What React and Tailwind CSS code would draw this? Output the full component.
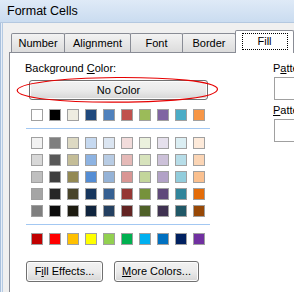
import React from "react";

const themeRow = ["#FFFFFF", "#000000", "#EEECE1", "#1F497D", "#4F81BD", "#C0504D", "#9BBB59", "#8064A2", "#4BACC6", "#F79646"];

const tintRows = [
    ["#F2F2F2", "#7F7F7F", "#DDD9C3", "#C6D9F0", "#DBE5F1", "#F2DCDB", "#EBF1DD", "#E5E0EC", "#DBEEF3", "#FDEADA"],
    ["#D8D8D8", "#595959", "#C4BD97", "#8DB3E2", "#B8CCE4", "#E5B9B7", "#D7E3BC", "#CCC1D9", "#B7DDE8", "#FBD5B5"],
    ["#BFBFBF", "#3F3F3F", "#938953", "#548DD4", "#95B3D7", "#D99694", "#C3D69B", "#B2A2C7", "#92CDDC", "#FAC08F"],
    ["#A5A5A5", "#262626", "#494429", "#17365D", "#366092", "#953734", "#76923C", "#5F497A", "#31859B", "#E36C09"],
    ["#7F7F7F", "#0C0C0C", "#1D1B10", "#0F243E", "#244061", "#632423", "#4F6128", "#3F3151", "#205867", "#974806"],
];

const standardRow = ["#C00000", "#FF0000", "#FFC000", "#FFFF00", "#92D050", "#00B050", "#00B0F0", "#0070C0", "#002060", "#7030A0"];

const tabs = [
    { name: "Number", w: "w-[54px]" },
    { name: "Alignment", w: "w-[67px]" },
    { name: "Font", w: "w-[53px]" },
    { name: "Border", w: "w-[54px]" },
];

const SwatchRow = ({ colors }) => (
    <div className="flex gap-[6px]">
        {colors.map((c, i) => (
            // swatch colour comes from data
            <div key={i} className="w-[12px] h-[12px] shrink-0 border border-[#a0a0a0]" style={{ backgroundColor: c }} />
        ))}
    </div>
);

const WinButton = ({ className, children }) => (
    <div
        className={`flex items-center justify-center shrink-0 rounded-[3px] border border-[#707070] bg-gradient-to-b from-[#f2f2f2] via-[#ebebeb] to-[#d6d6d6] shadow-[inset_0_0_0_1px_#fcfcfc] text-black ${className}`}
    >
        {children}
    </div>
);

const App = () => {
    return (
        <div className="w-[294px] h-[292px] overflow-hidden bg-[#f0f0f0] text-[11px] text-black font-['Liberation_Sans',Arial,sans-serif]">
            {/* title bar */}
            <div className="h-[23px] flex items-center pl-[7px] bg-gradient-to-b from-[#dfeaf7] to-[#cadcf0] border-b border-[#b4c8e0] text-[12.5px] text-black">
                Format Cells
            </div>

            <div className="flex h-[269px] overflow-hidden">
                {/* window frame edge */}
                <div className="w-[1px] shrink-0 bg-[#a9c0dc]" />
                <div className="w-[1px] shrink-0 bg-[#e6eef8]" />
                <div className="w-[1px] shrink-0 bg-[#b6cbe3]" />

                <div className="flex-1 min-w-0 pl-[6px] flex flex-col">
                    {/* tabs */}
                    <div className="h-[29px] flex items-end pl-[2px] shrink-0">
                        {tabs.map((t, i) => (
                            <div
                                key={t.name}
                                className={`${t.w} ${i > 0 ? "-ml-[1px]" : ""} shrink-0 h-[19px] flex items-center justify-center pt-[1px] border-t border-l border-r border-[#898c95] rounded-t-[2px] bg-gradient-to-b from-[#f3f3f3] to-[#dcdcdc]`}
                            >
                                {t.name}
                            </div>
                        ))}
                        <div className="relative z-10 -ml-[1px] -mb-[1px] shrink-0 w-[59px] h-[23px] border-t border-l border-r border-[#898c95] rounded-t-[2px] bg-white flex items-start justify-center pt-[2px]">
                            <div className="w-[46px] h-[17px] border border-dotted border-black flex items-center justify-center">
                                Fill
                            </div>
                        </div>
                    </div>

                    {/* panel */}
                    <div className="flex-1 bg-white border-t border-l border-[#898c95] flex">
                        <div className="w-[263px] shrink-0 pl-[15px] flex flex-col">
                            <div className="mt-[8px] h-[14px] leading-[14px]">
                                Background <span className="underline">C</span>olor:
                            </div>

                            <div className="relative mt-[5px] ml-[4px] w-[179px] h-[20px]">
                                <WinButton className="w-[179px] h-[20px]">No Color</WinButton>
                                <svg className="absolute left-[-13px] top-[-4px]" width="203" height="28" viewBox="0 0 203 28">
                                    <path
                                        d="M101 1.5 C 152 1.2 200 5 201.5 13 C 201 21.5 160 26 101 26.2 C 45 26.5 2 22 1.2 14.5 C 1 8 40 2 101 1.5 Z"
                                        fill="none"
                                        stroke="#e60000"
                                        strokeWidth="1.2"
                                    />
                                </svg>
                            </div>

                            <div className="mt-[9px] ml-[6px]">
                                <SwatchRow colors={themeRow} />
                            </div>

                            <div className="mt-[7px] ml-[1px] w-[184px] h-[1px] bg-[#a3c8f2]" />

                            <div className="mt-[8px] ml-[6px] flex flex-col gap-[5px]">
                                {tintRows.map((row, i) => (
                                    <SwatchRow key={i} colors={row} />
                                ))}
                            </div>

                            <div className="mt-[7px] ml-[1px] w-[184px] h-[1px] bg-[#a3c8f2]" />

                            <div className="mt-[8px] ml-[6px]">
                                <SwatchRow colors={standardRow} />
                            </div>

                            <div className="mt-[16px] ml-[1px] flex gap-[11px]">
                                <WinButton className="w-[77px] h-[21px]">
                                    <span>
                                        F<span className="underline">i</span>ll Effects...
                                    </span>
                                </WinButton>
                                <WinButton className="w-[85px] h-[21px]">
                                    <span>
                                        <span className="underline">M</span>ore Colors...
                                    </span>
                                </WinButton>
                            </div>
                        </div>

                        {/* pattern column */}
                        <div className="flex flex-col shrink-0">
                            <div className="mt-[8px] h-[14px] leading-[14px] whitespace-nowrap">
                                P<span className="underline">a</span>ttern Color:
                            </div>
                            <div className="mt-[2px] ml-[1px] w-[100px] h-[23px] border border-[#a0a0a0] bg-white" />
                            <div className="mt-[3px] h-[14px] leading-[14px] whitespace-nowrap">
                                <span className="underline">P</span>attern Style:
                            </div>
                            <div className="mt-[2px] ml-[1px] w-[100px] h-[23px] border border-[#a0a0a0] bg-white" />
                        </div>
                    </div>
                </div>
            </div>
        </div>
    );
};

export default App;
